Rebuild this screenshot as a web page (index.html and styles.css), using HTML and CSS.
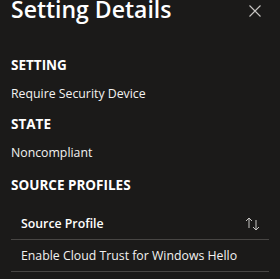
FILE: index.html
```html
<!DOCTYPE html>
<html lang="en">
<head>
    <meta charset="UTF-8">
    <title>Setting Details</title>
    <link rel="stylesheet" href="styles.css">
</head>
<body>
    <div class="panel">
        <div class="panel-header">
            <h1>Setting Details</h1>
            <button class="close-btn" aria-label="Close">
                <svg width="12" height="12" viewBox="0 0 12 12"><path d="M0.5 0.5 L11.5 11.5 M11.5 0.5 L0.5 11.5" stroke="#c8c6c4" stroke-width="1.1"/></svg>
            </button>
        </div>
        <h3 class="label">SETTING</h3>
        <div class="value">Require Security Device</div>
        <h3 class="label">STATE</h3>
        <div class="value">Noncompliant</div>
        <h3 class="label last">SOURCE PROFILES</h3>
        <div class="grid">
            <div class="grid-row grid-head">
                <span>Source Profile</span>
                <svg width="15" height="14" viewBox="0 0 15 14"><path d="M4 11 V1 M1 4 L4 1 L7 4 M11 3 V13 M8 10 L11 13 L14 10" stroke="#c8c6c4" stroke-width="1" fill="none"/></svg>
            </div>
            <div class="grid-row">
                <span>Enable Cloud Trust for Windows Hello</span>
            </div>
        </div>
    </div>
</body>
</html>
```

FILE: styles.css
```css
body {
    margin: 0;
    background-color: #1b1a19;
    color: #f3f2f1;
    font-family: "Open Sans", sans-serif;
}
.panel {
    padding: 0 11px;
}
.panel-header {
    display: flex;
    justify-content: space-between;
    align-items: flex-start;
    height: 45px;
}
h1 {
    margin: 0;
    font-size: 23px;
    font-weight: 600;
    line-height: 18px;
    color: #fff;
}
.close-btn {
    background: none;
    border: none;
    padding: 0;
    margin: 5px 8px 0 0;
    cursor: pointer;
}
.label {
    margin: 10px 0 0 0;
    font-size: 13.5px;
    font-weight: 700;
    line-height: 20px;
    color: #fff;
}
.label.last {
    margin-top: 12px;
}
.value {
    margin-top: 9px;
    font-size: 12.3px;
    line-height: 20px;
}
.grid {
    margin-top: 13px;
}
.grid-row {
    display: flex;
    justify-content: space-between;
    align-items: center;
    height: 31px;
    padding: 0 9px 0 10px;
    border-bottom: 1px solid #484644;
    font-size: 12.3px;
}
.grid-head {
    font-weight: 600;
    color: #fff;
}
```
